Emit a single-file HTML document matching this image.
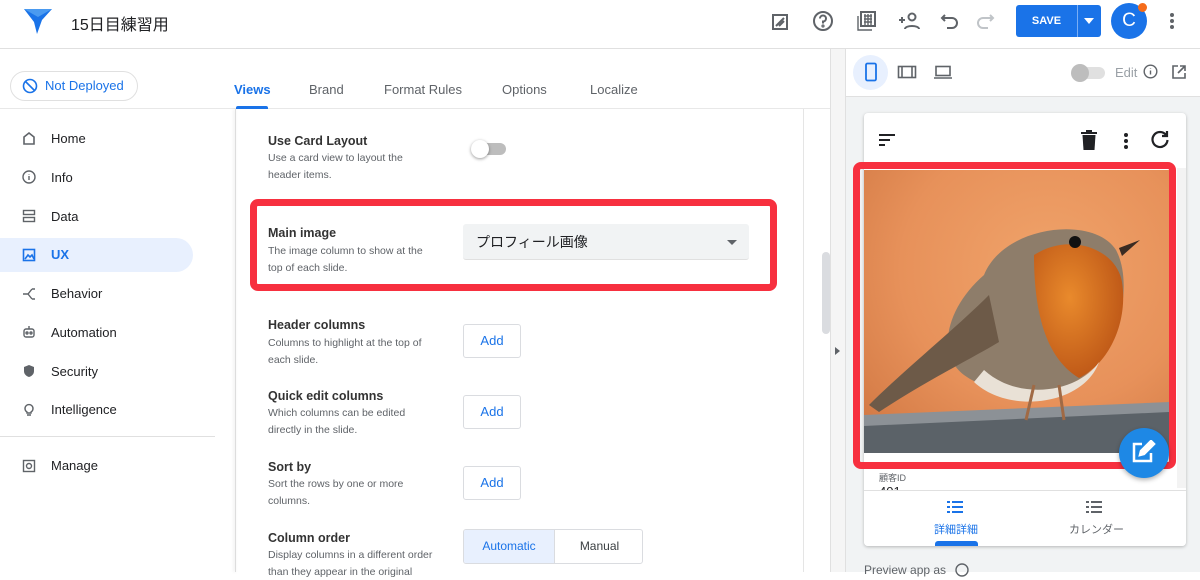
<!DOCTYPE html>
<html><head><meta charset="utf-8"><style>
*{box-sizing:border-box;margin:0;padding:0}
body{width:1200px;height:572px;overflow:hidden;background:#fff;font-family:"Liberation Sans","Noto Sans CJK JP",sans-serif;color:#202124;position:relative}
.a{position:absolute}
.ic{position:absolute;stroke:#5f6368;fill:none;stroke-width:2}
.nav{position:absolute;left:51px;font-size:13px;color:#202124}
.t{font-size:12.5px;font-weight:bold;color:#333}
.d{font-size:10.5px;color:#5f6368;line-height:16.5px}
.btn{position:absolute;left:463px;width:58px;height:34px;border:1px solid #dadce0;border-radius:3px;color:#1a73e8;font-size:13px;text-align:center;line-height:32px}
</style></head><body>
<div class="a" style="left:0;top:48px;width:1200px;height:1px;background:#e0e0e0"></div>
<svg class="a" style="left:22px;top:7px" width="32" height="28" viewBox="0 0 32 28"><path d="M2 2H30L20 13L15 27L12 15L2 2Z" fill="#1a73e8"/><path d="M2 2H30L16 10Z" fill="#4a9af0"/></svg>
<div class="a" style="left:71px;top:11px;font-size:16px">15日目練習用</div>
<svg class="ic" style="left:770px;top:12px" width="20" height="20" viewBox="0 0 20 20"><rect x="3" y="3" width="14" height="14"/><path d="M6 14L14 6M9 14L14 9"/></svg>
<svg class="ic" style="left:812px;top:10px" width="22" height="22" viewBox="0 0 22 22"><circle cx="11" cy="11" r="9"/><path d="M8 8.5a3 3 0 1 1 3 3v2"/><circle cx="11" cy="16" r=".6"/></svg>
<svg class="ic" style="left:855px;top:10px" width="22" height="22" viewBox="0 0 22 22"><rect x="6" y="2" width="14" height="14"/><path d="M3 6v14h14M9 6h8M9 9h8M9 12h8M10 4v11M13 4v11M16 4v11" stroke-width="1.4"/></svg>
<svg class="ic" style="left:897px;top:10px" width="24" height="22" viewBox="0 0 24 22"><circle cx="15" cy="7" r="3.5"/><path d="M8 19c0-4 14-4 14 0M2 10h6M5 7v6"/></svg>
<svg class="ic" style="left:940px;top:12px" width="20" height="18" viewBox="0 0 20 18"><path d="M5 3L2 6l3 3M2 6h10a5 5 0 0 1 0 10H7"/></svg>
<svg class="ic" style="left:975px;top:12px;stroke:#c0c4c8" width="20" height="18" viewBox="0 0 20 18"><path d="M15 3l3 3-3 3M18 6H8a5 5 0 0 0 0 10h5"/></svg>
<div class="a" style="left:1016px;top:5px;width:85px;height:32px;background:#1a73e8;border-radius:3px"></div>
<div class="a" style="left:1077px;top:5px;width:1px;height:32px;background:#7aaef5"></div>
<div class="a" style="left:1016px;top:5px;width:61px;line-height:32px;text-align:center;color:#fff;font-size:11px;font-weight:bold">SAVE</div>
<div class="a" style="left:1084px;top:18px;border:5px solid transparent;border-top:6px solid #fff"></div>
<div class="a" style="left:1111px;top:3px;width:36px;height:36px;border-radius:50%;background:#1a73e8;color:#fff;font-size:19px;text-align:center;line-height:36px">C</div>
<div class="a" style="left:1138px;top:3px;width:9px;height:9px;border-radius:50%;background:#f56c1a"></div>
<div class="a" style="left:1170px;top:13px;width:4px;height:4px;border-radius:50%;background:#5f6368;box-shadow:0 6px #5f6368,0 12px #5f6368"></div>

<div class="a" style="left:10px;top:71px;width:128px;height:30px;border:1px solid #e0e0e0;border-radius:15px"></div>
<svg class="a" style="left:22px;top:78px" width="16" height="16" viewBox="0 0 16 16" fill="none" stroke="#1a73e8" stroke-width="1.6"><circle cx="8" cy="8" r="6.5"/><path d="M3 3l10 10"/></svg>
<div class="a" style="left:45px;top:78px;font-size:13px;color:#1a73e8">Not Deployed</div>
<div class="a" style="left:0;top:108px;width:830px;height:1px;background:#e8e8e8"></div>
<div class="a" style="left:0;top:238px;width:193px;height:34px;background:#e8f0fe;border-radius:0 17px 17px 0"></div>
<svg class="ic" style="left:22px;top:131px;stroke-width:1.6" width="14" height="14" viewBox="0 0 14 14"><path d="M2 13V6l5-4 5 4v7z"/></svg><div class="nav" style="top:131px">Home</div>
<svg class="ic" style="left:22px;top:170px;stroke-width:1.4" width="14" height="14" viewBox="0 0 14 14"><circle cx="7" cy="7" r="6"/><path d="M7 6v4M7 4v.5"/></svg><div class="nav" style="top:170px">Info</div>
<svg class="ic" style="left:22px;top:209px;stroke-width:1.4" width="14" height="14" viewBox="0 0 14 14"><rect x="1.5" y="1.5" width="11" height="4"/><rect x="1.5" y="8.5" width="11" height="4"/></svg><div class="nav" style="top:209px">Data</div>
<svg class="ic" style="left:22px;top:248px;stroke:#1a73e8;stroke-width:1.6" width="14" height="14" viewBox="0 0 14 14"><rect x="1.5" y="1.5" width="11" height="11"/><path d="M3 11l3-4 2 2 2-2 2 4"/></svg><div class="nav" style="top:247px;color:#1a73e8;font-weight:bold">UX</div>
<svg class="ic" style="left:22px;top:287px;stroke-width:1.4" width="14" height="14" viewBox="0 0 14 14"><path d="M1 7h5l4-5M6 7l4 5M10 2h3M10 12h3"/></svg><div class="nav" style="top:286px">Behavior</div>
<svg class="ic" style="left:22px;top:325px;stroke-width:1.4" width="14" height="14" viewBox="0 0 14 14"><rect x="2" y="4" width="10" height="8" rx="2"/><circle cx="5" cy="8" r="1"/><circle cx="9" cy="8" r="1"/><path d="M7 1v3"/></svg><div class="nav" style="top:325px">Automation</div>
<svg class="a" style="left:22px;top:364px" width="14" height="14" viewBox="0 0 14 14"><path d="M7 1l5 2v4c0 3-2 5-5 6-3-1-5-3-5-6V3z" fill="#5f6368"/></svg><div class="nav" style="top:364px">Security</div>
<svg class="ic" style="left:22px;top:402px;stroke-width:1.4" width="14" height="14" viewBox="0 0 14 14"><path d="M5 10a4 4 0 1 1 4 0v1H5zM5 13h4"/></svg><div class="nav" style="top:402px">Intelligence</div>
<div class="a" style="left:0;top:436px;width:215px;height:1px;background:#e0e0e0"></div>
<svg class="ic" style="left:22px;top:459px;stroke-width:1.4" width="14" height="14" viewBox="0 0 14 14"><rect x="1.5" y="1.5" width="11" height="11"/><circle cx="7" cy="7" r="2.5"/></svg><div class="nav" style="top:458px">Manage</div>

<div class="a" style="left:234px;top:82px;font-size:13px;color:#1a73e8;font-weight:bold">Views</div>
<div class="a" style="left:236px;top:106px;width:32px;height:3px;background:#1a73e8;border-radius:2px 2px 0 0"></div>
<div class="a" style="left:309px;top:82px;font-size:13px;color:#5f6368">Brand</div>
<div class="a" style="left:384px;top:82px;font-size:13px;color:#5f6368">Format Rules</div>
<div class="a" style="left:502px;top:82px;font-size:13px;color:#5f6368">Options</div>
<div class="a" style="left:590px;top:82px;font-size:13px;color:#5f6368">Localize</div>

<div class="a" style="left:235px;top:109px;width:1px;height:463px;background:#ddd;box-shadow:-1px 0 3px rgba(0,0,0,.15)"></div>
<div class="a" style="left:803px;top:109px;width:1px;height:463px;background:#e5e5e5"></div>
<div class="a" style="left:822px;top:252px;width:8px;height:82px;background:#dadce0;border-radius:4px"></div>
<div class="a t" style="left:268px;top:134px">Use Card Layout</div>
<div class="a d" style="left:268px;top:150px">Use a card view to layout the<br>header items.</div>
<div class="a" style="left:474px;top:143px;width:32px;height:12px;background:#bdbdbd;border-radius:6px"></div>
<div class="a" style="left:471px;top:140px;width:18px;height:18px;background:#fff;border-radius:50%;box-shadow:0 1px 3px rgba(0,0,0,.4)"></div>

<div class="a" style="left:250px;top:199px;width:527px;height:92px;border:7px solid #f7303f;border-radius:8px"></div>
<div class="a t" style="left:268px;top:226px">Main image</div>
<div class="a d" style="left:268px;top:243px">The image column to show at the<br>top of each slide.</div>
<div class="a" style="left:463px;top:224px;width:286px;height:36px;background:#f1f3f4;border-radius:3px;border-bottom:1px solid #e0e0e0"></div>
<div class="a" style="left:476px;top:232px;font-size:14px;color:#202124">プロフィール画像</div>
<div class="a" style="left:727px;top:240px;border:5px solid transparent;border-top:5px solid #5f6368"></div>

<div class="a t" style="left:268px;top:318px">Header columns</div>
<div class="a d" style="left:268px;top:335px">Columns to highlight at the top of<br>each slide.</div>
<div class="btn" style="top:324px">Add</div>
<div class="a t" style="left:268px;top:389px">Quick edit columns</div>
<div class="a d" style="left:268px;top:405px">Which columns can be edited<br>directly in the slide.</div>
<div class="btn" style="top:395px">Add</div>
<div class="a t" style="left:268px;top:460px">Sort by</div>
<div class="a d" style="left:268px;top:476px">Sort the rows by one or more<br>columns.</div>
<div class="btn" style="top:466px">Add</div>
<div class="a t" style="left:268px;top:531px">Column order</div>
<div class="a d" style="left:268px;top:547px">Display columns in a different order<br>than they appear in the original</div>
<div class="a" style="left:463px;top:529px;width:180px;height:35px;border:1px solid #dadce0;border-radius:3px;overflow:hidden"><div style="position:absolute;left:0;top:0;width:91px;height:35px;background:#e8f0fe;border-right:1px solid #dadce0;color:#1a73e8;font-size:12px;text-align:center;line-height:33px">Automatic</div><div style="position:absolute;left:91px;top:0;width:89px;color:#3c4043;font-size:12px;text-align:center;line-height:33px">Manual</div></div>

<div class="a" style="left:830px;top:49px;width:16px;height:523px;background:#f5f5f5;border-left:1px solid #e0e0e0;border-right:1px solid #e0e0e0"></div>
<div class="a" style="left:835px;top:347px;border:4px solid transparent;border-left:5px solid #5f6368"></div>
<div class="a" style="left:846px;top:96px;width:354px;height:476px;background:#f1f3f4;border-top:1px solid #e0e0e0"></div>
<div class="a" style="left:853px;top:55px;width:35px;height:35px;border-radius:50%;background:#e8f0fe"></div>
<svg class="a" style="left:864px;top:62px" width="14" height="20" viewBox="0 0 14 20" fill="none" stroke="#1a73e8" stroke-width="1.8"><rect x="2" y="1.5" width="10" height="17" rx="1.5"/></svg>
<svg class="ic" style="left:897px;top:65px;stroke-width:1.6" width="20" height="14" viewBox="0 0 20 14"><rect x="1.5" y="1.5" width="17" height="11"/><path d="M5 2v10M15 2v10"/></svg>
<svg class="ic" style="left:933px;top:65px;stroke-width:1.6" width="20" height="14" viewBox="0 0 20 14"><rect x="3" y="1.5" width="14" height="9"/><path d="M1 13h18"/></svg>
<div class="a" style="left:1073px;top:67px;width:32px;height:12px;background:#e0e0e0;border-radius:6px"></div>
<div class="a" style="left:1071px;top:64px;width:18px;height:18px;background:#bdbdbd;border-radius:50%"></div>
<div class="a" style="left:1115px;top:65px;font-size:13px;color:#9aa0a6">Edit</div>
<svg class="ic" style="left:1143px;top:64px;stroke-width:1.4" width="15" height="15" viewBox="0 0 15 15"><circle cx="7.5" cy="7.5" r="6.3"/><path d="M7.5 6.5v4M7.5 4.2v.6"/></svg>
<svg class="ic" style="left:1171px;top:64px;stroke-width:1.6" width="16" height="16" viewBox="0 0 16 16"><path d="M7 2H2v12h12V9M9 2h5v5M14 2L7 9"/></svg>

<div class="a" style="left:864px;top:113px;width:322px;height:433px;background:#fff;border-radius:4px;box-shadow:0 1px 3px rgba(0,0,0,.25);overflow:hidden">
 <svg class="ic" style="left:14px;top:20px;stroke:#202124" width="18" height="14" viewBox="0 0 18 14"><path d="M1 2h16M1 7h11M1 12h6"/></svg>
 <svg class="a" style="left:216px;top:17px" width="18" height="20" viewBox="0 0 18 20" fill="#202124"><rect x="1" y="2" width="16" height="2"/><rect x="6" y="0" width="6" height="2"/><path d="M2.5 5h13l-1 15h-11z"/></svg>
 <div class="a" style="left:260px;top:20px;width:4px;height:4px;border-radius:50%;background:#202124;box-shadow:0 6px #202124,0 12px #202124"></div>
 <svg class="ic" style="left:286px;top:16px;stroke:#202124;stroke-width:2.2" width="20" height="20" viewBox="0 0 20 20"><path d="M16 6A7.5 7.5 0 1 0 17.5 11M17 2v5h-5"/></svg>
 <div class="a" style="left:313px;top:55px;width:9px;height:320px;background:#f3f3f3"></div>
 <div class="a" style="left:15px;top:358px;font-size:9px;color:#5f6368">顧客ID</div>
 <div class="a" style="left:15px;top:371px;font-size:13px;color:#202124">401</div>
 <div class="a" style="left:0;top:377px;width:322px;height:56px;background:#fff;border-top:1px solid #e0e0e0"></div>
 <svg class="a" style="left:83px;top:387px" width="16" height="14" viewBox="0 0 16 14" fill="#1a73e8"><rect x="0" y="1" width="3" height="2"/><rect x="5" y="1" width="11" height="2"/><rect x="0" y="6" width="3" height="2"/><rect x="5" y="6" width="11" height="2"/><rect x="0" y="11" width="3" height="2"/><rect x="5" y="11" width="11" height="2"/></svg>
 <div class="a" style="left:70px;top:408px;font-size:11px;color:#1a73e8">詳細詳細</div>
 <div class="a" style="left:71px;top:428px;width:43px;height:5px;background:#1a73e8;border-radius:3px 3px 0 0"></div>
 <svg class="a" style="left:222px;top:387px" width="16" height="14" viewBox="0 0 16 14" fill="#5f6368"><rect x="0" y="1" width="3" height="2"/><rect x="5" y="1" width="11" height="2"/><rect x="0" y="6" width="3" height="2"/><rect x="5" y="6" width="11" height="2"/><rect x="0" y="11" width="3" height="2"/><rect x="5" y="11" width="11" height="2"/></svg>
 <div class="a" style="left:205px;top:408px;font-size:11px;color:#5f6368">カレンダー</div>
</div>
<svg class="a" style="left:864px;top:170px" width="305" height="283" viewBox="0 0 305 283">
 <defs><radialGradient id="bg" cx="60%" cy="35%" r="80%"><stop offset="0" stop-color="#f0a36a"/><stop offset=".6" stop-color="#e7915a"/><stop offset="1" stop-color="#d37a45"/></radialGradient>
 <radialGradient id="br" cx="40%" cy="40%" r="60%"><stop offset="0" stop-color="#e98a2c"/><stop offset="1" stop-color="#c05a18"/></radialGradient></defs>
 <rect width="305" height="283" fill="url(#bg)"/>
 <path d="M0 250L305 235V283H0Z" fill="#5b6268"/>
 <path d="M0 245L305 232V242L0 256Z" fill="#8c9196"/>
 <path d="M120 105C140 55 230 45 252 80C268 110 258 165 232 195C200 232 135 230 100 205C70 182 85 135 120 105Z" fill="#8e7d6a"/>
 <path d="M170 85C205 62 252 78 258 112C264 150 247 192 215 208C185 190 170 150 170 85Z" fill="url(#br)"/>
 <path d="M120 200C155 232 215 222 235 192C220 235 145 245 110 212Z" fill="#e9e1d6"/>
 <path d="M125 125C90 160 40 200 5 235L15 242C60 212 105 190 135 172Z" fill="#6d5a48"/>
 <path d="M255 78L276 70L258 86Z" fill="#3a2b22"/>
 <circle cx="211" cy="72" r="6" fill="#111"/>
 <path d="M170 215L162 250M195 215L200 250" stroke="#a06a45" stroke-width="3"/>
</svg>
<div class="a" style="left:853px;top:162px;width:323px;height:307px;border:7px solid #f7303f;border-radius:8px"></div>
<div class="a" style="left:1119px;top:428px;width:50px;height:50px;border-radius:50%;background:#1e88e5;box-shadow:0 2px 5px rgba(0,0,0,.3)"></div>
<svg class="a" style="left:1131px;top:440px" width="26" height="24" viewBox="0 0 26 24" fill="none" stroke="#fff" stroke-width="2.5"><path d="M11 4H3v17h17v-8"/><path d="M9 15l1-4 10-10 3 3-10 10z" fill="#fff"/></svg>
<div class="a" style="left:864px;top:563px;font-size:12px;color:#5f6368">Preview app as</div>
<svg class="ic" style="left:955px;top:563px;stroke-width:1.4" width="14" height="14" viewBox="0 0 14 14"><circle cx="7" cy="7" r="6"/></svg>
</body></html>
